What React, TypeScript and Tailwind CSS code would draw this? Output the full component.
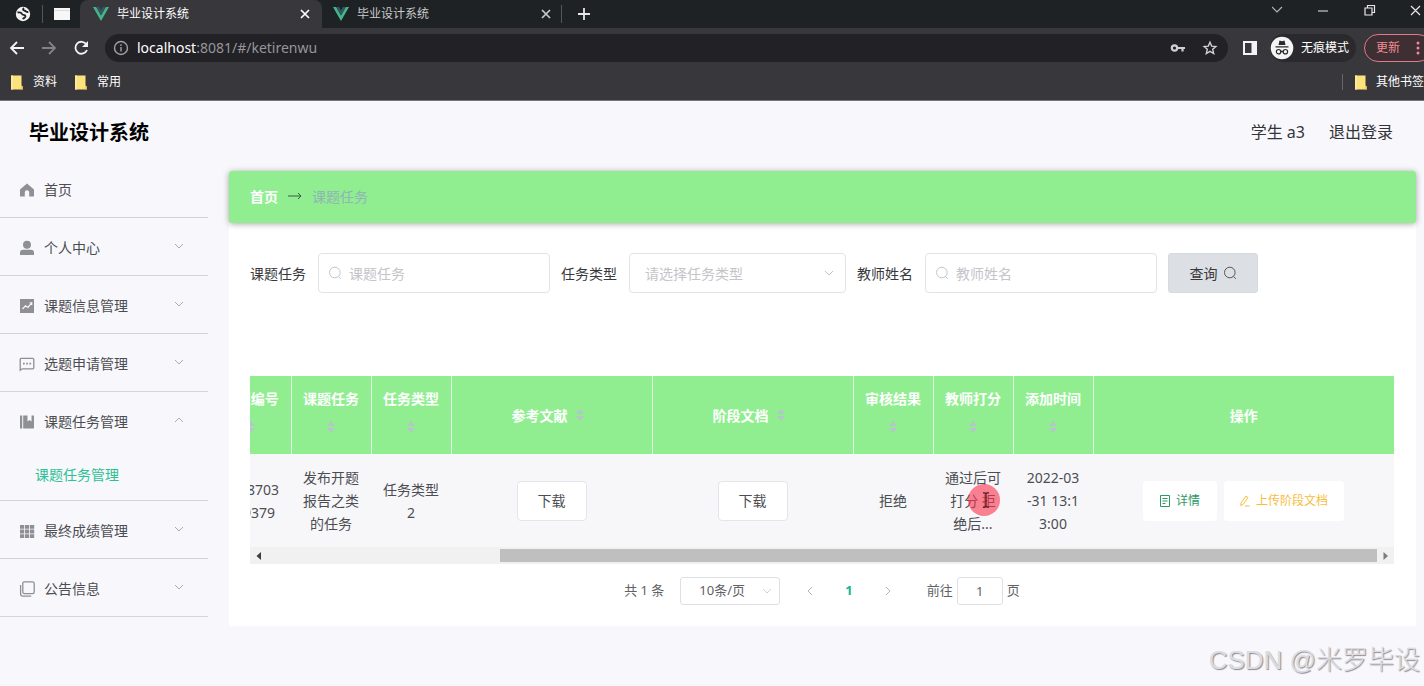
import type { ReactNode } from "react";
import clsx from "clsx";

const Vue = () => (
  <svg viewBox="0 0 16 14" className="h-[14px] w-4 shrink-0" aria-hidden>
    <path d="M0 0h3.2L8 8.4 12.8 0H16L8 14z" fill="#41b883" />
    <path d="M3.2 0h2.9L8 3.4 9.900 0h2.900L8 8.400z" fill="#34566b" />
  </svg>
);

const Close = () => (
  <svg viewBox="0 0 10 10" className="h-[10px] w-[10px]" stroke="currentColor" strokeWidth="1.7" aria-hidden>
    <path d="M1 1l8 8M9 1L1 9" />
  </svg>
);

const Folder = () => (
  <svg viewBox="0 0 13 15" className="h-[15px] w-[13px] shrink-0" aria-hidden>
    <path d="M1 0.5h10.5v10l1.2 1v3H1z" fill="#fce27c" />
    <path d="M1 0.5h2v14H1z" fill="#fdeb9d" />
    <path d="M11.5 10.5l1.2 1v3h-2z" fill="#eec54f" />
  </svg>
);

const SearchIcon = ({ className }: { className?: string }) => (
  <svg viewBox="0 0 14 14" className={clsx("h-[14px] w-[14px]", className)} fill="none" stroke="currentColor" aria-hidden>
    <circle cx="6.8" cy="6.5" r="5.3" />
    <path d="M10.4 10.4l2.4 2.4" />
  </svg>
);

const Chevron = ({ up, className }: { up?: boolean; className?: string }) => (
  <svg viewBox="0 0 10 10" className={clsx("h-[10px] w-[10px]", className)} fill="none" stroke="currentColor" aria-hidden>
    <path d={up ? "M1 7l4-4 4 4" : "M1 3l4 4 4-4"} />
  </svg>
);

const MenuIcon = ({ children }: { children: ReactNode }) => (
  <svg viewBox="0 0 16 16" className="h-4 w-4 shrink-0 text-[#8f9095]" fill="currentColor" aria-hidden>
    {children}
  </svg>
);

const outline = { fill: "none", stroke: "currentColor", strokeWidth: 1.3 };

const menu = [
  {
    text: "首页",
    icon: <path d="M8 1.5L1 7.6V14.6h4.8v-4.2a2.2 2.2 0 0 1 4.4 0v4.2H15V7.6z" />,
  },
  {
    text: "个人中心",
    arrow: true,
    icon: (
      <>
        <circle cx="8" cy="4.8" r="4" />
        <path d="M1 15v-2.2a3 3 0 0 1 3-3h8a3 3 0 0 1 3 3V15z" />
      </>
    ),
  },
  {
    text: "课题信息管理",
    arrow: true,
    icon: (
      <>
        <path d="M1 1h14v14H1z" />
        <path d="M3.5 11l3-3.2 2.4 1.6 3.8-4.6M10.6 4.8h2.2v2.2" fill="none" stroke="#f7f7fc" strokeWidth="1.1" />
      </>
    ),
  },
  {
    text: "选题申请管理",
    arrow: true,
    icon: (
      <>
        <path d="M1.2 14.2V3.4a1 1 0 0 1 1-1h11.6a1 1 0 0 1 1 1v8.4a1 1 0 0 1-1 1H3.4z" {...outline} />
        <path d="M4 6.8h1.7v1.7H4zM7.2 6.8h1.7v1.7H7.2zM10.4 6.8h1.7v1.7h-1.7z" />
      </>
    ),
  },
  {
    text: "课题任务管理",
    arrow: true,
    icon: (
      <>
        <path d="M1 1.5h2.2v13H1z" />
        <path d="M4.2 1.5h4.3v6l2-1.4 2 1.4v-6H15v13H4.2z" />
      </>
    ),
    child: "课题任务管理",
  },
  {
    text: "最终成绩管理",
    arrow: true,
    icon: (
      <path d="M1 2h4.2v3.8H1zM6 2h4.2v3.8H6zM11 2h4.2v3.8H11zM1 6.6h4.2v3.8H1zM6 6.6h4.2v3.8H6zM11 6.6h4.2v3.8H11zM1 11.2h4.2V15H1zM6 11.2h4.2V15H6zM11 11.2h4.2V15H11z" />
    ),
  },
  {
    text: "公告信息",
    arrow: true,
    icon: (
      <>
        <rect x="3.8" y="0.8" width="11.4" height="11.8" rx="1.6" {...outline} />
        <path d="M1.6 4v9.2a2 2 0 0 0 2 2h8.6" {...outline} />
      </>
    ),
  },
];

const columns = [
  { title: "课题编号", sort: true },
  { title: "课题任务", sort: true },
  { title: "任务类型", sort: true },
  { title: "参考文献", sort: true },
  { title: "阶段文档", sort: true },
  { title: "审核结果", sort: true },
  { title: "教师打分", sort: true },
  { title: "添加时间", sort: true },
  { title: "操作", sort: false },
];

function BrowserBar() {
  return (
    <div className="overflow-hidden border-b border-[#77767c] bg-[#38373b] text-[12px] text-white">
      <div className="flex h-7 bg-[#1f2225]">
        <div className="flex w-20 shrink-0 items-center">
          <svg viewBox="0 0 16 16" className="ml-[15px] h-4 w-4" aria-hidden>
            <circle cx="8" cy="8" r="7.2" fill="#f4f4f4" />
            <path d="M2.500 6.500c2.500-.5 4 .2 4.500 1.500s3.500.5 3.500 2.200-2 1.500-2.500 3M9 2c-1.500 1-1.200 2.200.3 2.500s1.700 1.700 4 1.500" fill="none" stroke="#1f2225" strokeWidth="1.8" />
          </svg>
          <span className="ml-[11px] h-[18px] w-px bg-[#55565a]" />
          <svg viewBox="0 0 18 14" className="ml-[10px] h-[14px] w-[18px]" aria-hidden>
            <path d="M1 1h16v12H1z" fill="#f7f7f7" />
            <path d="M1 3.5h16" stroke="#dcdcdc" />
          </svg>
        </div>
        <div className="flex w-[242px] shrink-0 items-center rounded-t-lg bg-[#38373b] pr-3 pl-[13px]">
          <Vue />
          <span className="ml-2 flex-1">毕业设计系统</span>
          <button aria-label="关闭"><Close /></button>
        </div>
        <div className="flex w-[240px] shrink-0 items-center pl-[11px] text-[#c9cacc]">
          <Vue />
          <span className="ml-2 flex-1">毕业设计系统</span>
          <button aria-label="关闭"><Close /></button>
          <span className="ml-[10px] h-[18px] w-px bg-[#55565a]" />
        </div>
        <button aria-label="新标签页" className="ml-4 text-[#e6e6e6]">
          <svg viewBox="0 0 12 12" className="h-3 w-3" stroke="currentColor" strokeWidth="1.8" aria-hidden>
            <path d="M6 0v12M0 6h12" />
          </svg>
        </button>
        <svg viewBox="0 0 152 20" className="ml-auto h-5 w-[152px]" fill="none" stroke="#e8e8e8" strokeWidth="1.2" aria-hidden>
          <path d="M0 7l5 5 5-5" stroke="#b4b4b6" />
          <path d="M46 11h10M93 8h7v7h-7zM95.5 8V5.5h7v7H100M139 6l9 9M148 6l-9 9" />
        </svg>
      </div>

      <div className="flex h-10 items-center">
        <svg viewBox="0 0 84 16" className="ml-[9px] h-4 w-[84px] shrink-0" fill="none" stroke="#f4f4f4" strokeWidth="1.8" aria-hidden>
          <path d="M15 8H2M8 2L2 8l6 6" />
          <path d="M33 8h13M40 2l6 6-6 6" stroke="#828287" />
          <path d="M77.5 4.5A6 6 0 1 0 78 10" />
          <path d="M79 1v6h-6z" fill="#f4f4f4" stroke="none" />
        </svg>
        <div className="ml-3 flex h-7 flex-1 items-center rounded-full bg-[#222126] pr-[10px] pl-2">
          <svg viewBox="0 0 16 16" className="h-4 w-4" fill="none" stroke="#a2a2a5" strokeWidth="1.4" aria-hidden>
            <circle cx="8" cy="8" r="6.5" />
            <path d="M8 7v4.5M8 4.3V6" />
          </svg>
          <p className="ml-2 flex-1 text-[14px] leading-5 text-[#96969a]">
            <span className="text-white">localhost</span>:8081/#/ketirenwu
          </p>
          <svg viewBox="0 0 16 16" className="h-4 w-4" fill="none" stroke="#d0d0d2" strokeWidth="2.2" aria-hidden>
            <circle cx="4.5" cy="8" r="2.7" />
            <path d="M7.5 8H15M12.5 8v3.5" />
          </svg>
          <svg viewBox="0 0 16 16" className="ml-4 h-4 w-4" fill="none" stroke="#d0d0d2" strokeWidth="1.4" aria-hidden>
            <path d="M8 2.2l1.700 3.900 4.200.4-3.200 2.800 1 4.200L8 11.300l-3.700 2.200 1-4.200-3.200-2.800 4.200-.4z" />
          </svg>
        </div>
        <svg viewBox="0 0 16 16" className="ml-[14px] h-4 w-4 shrink-0" aria-hidden>
          <path d="M1 1h14v14H1z" fill="#f4f4f4" />
          <path d="M3 3h6.500v10H3z" fill="#38373b" />
        </svg>
        <div className="ml-3 flex h-7 shrink-0 items-center rounded-full bg-[#2a2a2e] pr-[7px]">
          <svg viewBox="0 0 24 24" className="h-6 w-6" aria-hidden>
            <circle cx="12" cy="12" r="11.3" fill="#f5f5f5" />
            <path d="M8.5 9l1-4.500 2.500.8 2.500-.8 1 4.500z" fill="#2a2a2e" />
            <path d="M5.5 10.800h13M10.800 15.500h2.400" stroke="#2a2a2e" strokeWidth="1.3" />
            <g fill="none" stroke="#2a2a2e" strokeWidth="1.2">
              <circle cx="8.6" cy="15.7" r="2.2" />
              <circle cx="15.4" cy="15.7" r="2.2" />
            </g>
          </svg>
          <span className="ml-[7px]">无痕模式</span>
        </div>
        <button className="-mr-2 ml-2 flex h-7 w-[68px] shrink-0 items-center rounded-full border border-[#e07a86] bg-[#3d2f34] pl-[11px] text-[#f28b92]">
          更新
          <svg viewBox="0 0 4 16" className="ml-4 h-4 w-1" fill="currentColor" aria-hidden>
            <circle cx="2" cy="3" r="1.5" />
            <circle cx="2" cy="8" r="1.5" />
            <circle cx="2" cy="13" r="1.5" />
          </svg>
        </button>
      </div>

      <div className="flex h-8 items-center pb-1 pl-[10px]">
        <Folder />
        <span className="ml-[10px]">资料</span>
        <span className="ml-[17px] flex"><Folder /></span>
        <span className="ml-[10px]">常用</span>
        <span className="ml-auto h-4 w-px bg-[#65656a]" />
        <span className="ml-[11px] flex"><Folder /></span>
        <span className="ml-[9px] whitespace-nowrap">其他书签</span>
      </div>
    </div>
  );
}

function Sidebar() {
  return (
    <nav className="w-52 shrink-0 text-[14px] text-[#4c4d52]">
      <ul>
        {menu.map((item) => (
          <li key={item.text} className="border-b border-[#d3d3da]">
            <a href="#" className="flex h-[57px] items-center pt-[3px] pr-6 pl-[19px]">
              <MenuIcon>{item.icon}</MenuIcon>
              <span className="ml-[9px] flex-1 pb-[2px]">{item.text}</span>
              {item.arrow && <Chevron up={!!item.child} className="mb-1 text-[#a9abb0]" />}
            </a>
            {item.child && (
              <a href="#" className="flex h-[51px] items-center pl-[35px] text-[#2fc196]">
                {item.child}
              </a>
            )}
          </li>
        ))}
      </ul>
    </nav>
  );
}

const inputClass =
  "h-10 w-full rounded border border-[#e2e3e6] bg-white text-[14px] text-[#606266] outline-none placeholder:text-[#c4c5c9]";

function SearchField({ id, label }: { id: string; label: string }) {
  return (
    <div className="flex items-center gap-3">
      <label htmlFor={id}>{label}</label>
      <div className="relative w-[232px]">
        <SearchIcon className="absolute top-[13px] left-[10px] text-[#c4c5c9]" />
        <input id={id} placeholder={label} className={clsx(inputClass, "pr-3 pl-[30px]")} />
      </div>
    </div>
  );
}

function SearchForm() {
  return (
    <form className="flex items-center gap-[11px] text-[14px] text-[#38393d]">
      <SearchField id="task" label="课题任务" />
      <div className="flex items-center gap-3">
        <label htmlFor="type">任务类型</label>
        <div className="relative w-[217px]">
          <select id="type" className={clsx(inputClass, "appearance-none px-[15px] text-[#c4c5c9]")}>
            <option>请选择任务类型</option>
          </select>
          <Chevron className="pointer-events-none absolute top-[15px] right-3 text-[#c4c5c9]" />
        </div>
      </div>
      <SearchField id="teacher" label="教师姓名" />
      <button type="button" className="flex h-10 w-[90px] items-center justify-center gap-[5px] rounded-[3px] border border-[#d6dade] bg-[#dcdfe3]">
        查询
        <SearchIcon className="text-[#55565a]" />
      </button>
    </form>
  );
}

const Download = () => (
  <button className="h-10 w-[70px] rounded border border-[#e4e5ea] bg-white text-[14px] text-[#4c4d52]">下载</button>
);

function TaskTable() {
  return (
    <div>
      <div className="flex justify-end overflow-hidden">
        <table className="w-full min-w-[1183px] shrink-0 table-fixed border-collapse text-center text-[14px] leading-[23px]">
          <colgroup>
            <col className="w-20" />
            <col className="w-20" />
            <col className="w-20" />
            <col className="w-[201px]" />
            <col className="w-[201px]" />
            <col className="w-20" />
            <col className="w-20" />
            <col className="w-20" />
            <col />
          </colgroup>
          <thead>
            <tr className="h-[78px] bg-[#90ee90] text-white">
              {columns.map((col) => (
                <th key={col.title} className="border-r border-[#e4f8e6] px-[9px] py-0 font-bold last:border-r-0">
                  <div className="flex flex-wrap items-center justify-center">
                    {col.title}
                    {col.sort && (
                      <span className="flex h-[34px] w-6 items-center justify-center">
                        <svg viewBox="0 0 10 12" className="h-3 w-[10px] text-[#b5c6c8]" fill="currentColor" aria-hidden>
                          <path d="M5 0l4 5H1zM5 12l4-5H1z" />
                        </svg>
                      </span>
                    )}
                  </div>
                </th>
              ))}
            </tr>
          </thead>
          <tbody>
            <tr className="bg-[#f7f7fa] text-[#4c4d52] [&>td]:px-[10px] [&>td]:py-3 [&>td]:break-all [&>td]:whitespace-pre-line">
              <td>{"1648703\n579379"}</td>
              <td>发布开题报告之类的任务</td>
              <td>任务类型2</td>
              <td><Download /></td>
              <td><Download /></td>
              <td>拒绝</td>
              <td className="relative">
                {"通过后可\n打分 拒\n绝后..."}
                <span className="absolute top-[30px] left-[35px] flex h-8 w-8 items-center justify-center rounded-full bg-[#f8304a]/60">
                  <svg viewBox="0 0 8 16" className="ml-1 h-4 w-2" fill="none" stroke="#4a1a24" strokeWidth="1.2" aria-hidden>
                    <path d="M1 .8h2l1 1 1-1h2M4 1.800v12.400M1 15.200h2l1-1 1 1h2" />
                  </svg>
                </span>
              </td>
              <td>{"2022-03\n-31 13:1\n3:00"}</td>
              <td>
                <div className="flex justify-center gap-[7px] text-[12px]">
                  <button className="flex h-10 items-center gap-[6px] rounded bg-white px-[17px] text-[#2c9a63]">
                    <svg viewBox="0 0 10 12" className="h-3 w-[10px]" fill="none" stroke="currentColor" aria-hidden>
                      <path d="M.5.5h9v11h-9zM2.500 3.500h5M2.500 6h5M2.500 8.500h3" />
                    </svg>
                    详情
                  </button>
                  <button className="flex h-10 items-center gap-[6px] rounded bg-white px-4 text-[#f7bd3c]">
                    <svg viewBox="0 0 10 12" className="h-3 w-[10px]" fill="none" stroke="currentColor" aria-hidden>
                      <path d="M6 1l2 1.500-5 7-2.300 1L1 8zM5 11h4.500" />
                    </svg>
                    上传阶段文档
                  </button>
                </div>
              </td>
            </tr>
          </tbody>
        </table>
      </div>
      <div className="flex h-[17px] items-center bg-[#f1f1f2]" aria-hidden>
        <svg viewBox="0 0 17 8" className="h-2 w-[17px]"><path d="M11 0v8L6.500 4z" fill="#3c3c3e" /></svg>
        <div className="flex flex-1 justify-end">
          <div className="h-[13px] w-[79%] bg-[#bfbfc0]" />
        </div>
        <svg viewBox="0 0 17 8" className="h-2 w-[17px]"><path d="M6.500 0v8L11 4z" fill="#7d7d80" /></svg>
      </div>
    </div>
  );
}

function Pagination() {
  return (
    <div className="mt-[13px] flex h-7 items-center justify-center text-[13px] text-[#606266]">
      <span>共 1 条</span>
      <div className="relative ml-4 w-[100px]">
        <select aria-label="每页条数" className="h-7 w-full appearance-none rounded-[3px] border border-[#dfe0e4] bg-white pl-[18px] text-[13px]">
          <option>10条/页</option>
        </select>
        <Chevron className="pointer-events-none absolute top-[9px] right-2 text-[#d2d3d8]" />
      </div>
      <button aria-label="上一页" className="ml-[25px]">
        <Chevron className="rotate-90 text-[#b4b6bc]" />
      </button>
      <button className="mx-[30px] font-bold text-[#1fb58a]">1</button>
      <button aria-label="下一页">
        <Chevron className="-rotate-90 text-[#b4b6bc]" />
      </button>
      <label htmlFor="page" className="ml-[34px]">前往</label>
      <input id="page" defaultValue="1" className="mx-1 h-7 w-[46px] rounded-[3px] border border-[#dfe0e4] bg-white text-center" />
      <span>页</span>
    </div>
  );
}

export default function App() {
  return (
    <div className="relative min-h-screen overflow-hidden bg-[#f7f7fc] font-['Noto_Sans','Noto_Sans_CJK_SC',sans-serif]">
      <BrowserBar />
      <header className="flex h-[59px] items-center justify-between pr-[31px] pl-[29px]">
        <h1 className="pt-1 text-[20px] font-bold text-black">毕业设计系统</h1>
        <div className="flex gap-6 pt-[2px] text-[16px] text-[#333338]">
          <span>学生 a3</span>
          <a href="#">退出登录</a>
        </div>
      </header>
      <div className="flex items-start">
        <Sidebar />
        <main className="mt-[11px] mr-2 ml-[21px] min-w-0 flex-1 bg-white">
          <div className="relative flex h-[52px] items-center gap-[10px] rounded-[3px] bg-[#90ee90] pb-[2px] pl-[21px] text-[14px] shadow-[0_1px_6px_rgba(0,0,0,0.35)]">
            <a href="#" className="font-bold text-white">首页</a>
            <svg viewBox="0 0 14 8" className="h-2 w-[14px]" fill="none" stroke="#3d5a40" aria-hidden>
              <path d="M0 4h13M10 1l3 3-3 3" />
            </svg>
            <span className="text-[#8fb5b5]">课题任务</span>
          </div>
          <div className="pt-[30px] pr-[22px] pb-[21px] pl-[21px]">
            <SearchForm />
            <div className="mt-[83px]">
              <TaskTable />
            </div>
            <Pagination />
          </div>
        </main>
      </div>
      <p className="absolute right-1 bottom-2 font-['Liberation_Sans','Noto_Sans_CJK_SC',sans-serif] text-[26px] leading-9 font-light text-[#dcdce0] [text-shadow:1px_1px_1px_#8c8c90]">
        CSDN @米罗毕设
      </p>
    </div>
  );
}
